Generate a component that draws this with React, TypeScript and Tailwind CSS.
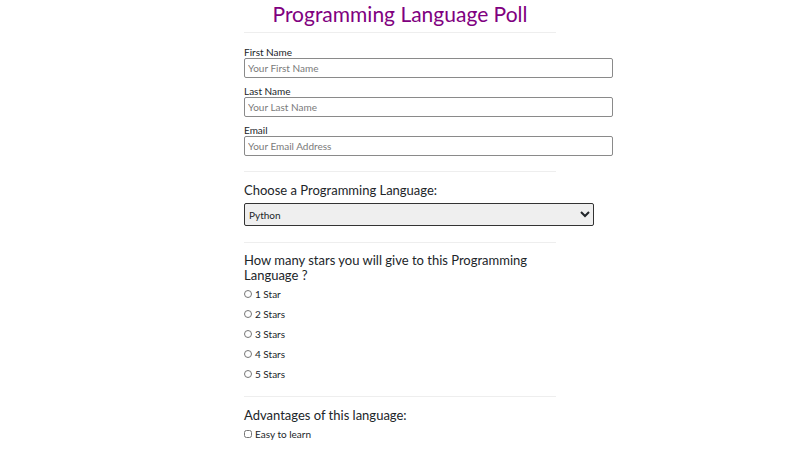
import React, { useState } from 'react';

const font = { fontFamily: '"Lato", "Open Sans", sans-serif' };

const stars = ['1 Star', '2 Stars', '3 Stars', '4 Stars', '5 Stars'];

const Field = ({ label, placeholder, type = 'text' }: { label: string; placeholder: string; type?: string }) => (
  <div className="flex flex-col">
    <label className="h-[14px] flex items-end text-[10px] leading-[12px] text-[#212529]">{label}</label>
    <input
      type={type}
      placeholder={placeholder}
      className="w-[369px] h-[20px] border border-[#8a8a8a] rounded-[2px] px-[3px] text-[10px] text-[#212529] placeholder:text-[#7a7a7a] outline-none"
    />
  </div>
);

const App = () => {
  const [language, setLanguage] = useState('Python');
  const [rating, setRating] = useState<string | null>(null);

  return (
    <div className="min-h-screen bg-white text-[#212529]" style={font}>
      <div className="w-[312px] mx-auto">
        <h1 className="h-[33px] leading-[27px] text-center text-[21px] text-[#800080] border-b border-[#eeeeee]">
          Programming Language Poll
        </h1>

        <div className="mt-[11px] flex flex-col gap-[5px]">
          <Field label="First Name" placeholder="Your First Name" />
          <Field label="Last Name" placeholder="Your Last Name" />
          <Field label="Email" placeholder="Your Email Address" type="email" />
        </div>

        <hr className="mt-[15px] border-t border-[#eeeeee]" />

        <p className="mt-[9px] text-[13px] leading-[18px]">Choose a Programming Language:</p>
        <select
          value={language}
          onChange={(e) => setLanguage(e.target.value)}
          className="mt-[4px] w-[350px] h-[23px] bg-[#efefef] border border-[#333333] rounded-[2px] text-[10px] px-0"
        >
          <option>Python</option>
          <option>JavaScript</option>
          <option>Java</option>
          <option>C++</option>
        </select>

        <hr className="mt-[16px] border-t border-[#eeeeee]" />

        <p className="mt-[10px] text-[13px] leading-[15px]">How many stars you will give to this Programming Language ?</p>
        <div className="mt-[1px] flex flex-col">
          {stars.map((s) => (
            <label key={s} className="h-[20px] flex items-center gap-[3px] text-[10px]">
              <input
                type="radio"
                name="stars"
                checked={rating === s}
                onChange={() => setRating(s)}
                className="m-0 w-[8px] h-[8px]"
              />
              {s}
            </label>
          ))}
        </div>

        <hr className="mt-[12px] border-t border-[#eeeeee]" />

        <p className="mt-[9px] text-[13px] leading-[18px]">Advantages of this language:</p>
        <label className="h-[20px] flex items-center gap-[3px] text-[10px]">
          <input type="checkbox" className="m-0 w-[8px] h-[8px]" />
          Easy to learn
        </label>
      </div>
    </div>
  );
};

export default App;
